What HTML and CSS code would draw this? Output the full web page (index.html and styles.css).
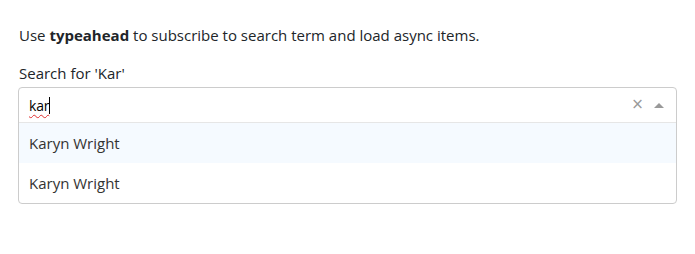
FILE: index.html
```html
<!DOCTYPE html>
<html>
<head>
<meta charset="utf-8">
<link rel="stylesheet" href="styles.css">
</head>
<body>
<div class="page">
  <p class="intro">Use <b>typeahead</b> to subscribe to search term and load async items.</p>
  <label class="label">Search for 'Kar'</label>
  <div class="select">
    <div class="control">
      <span class="value"><span class="typed">kar</span><span class="caret"></span></span>
      <span class="clear">×</span>
      <span class="arrow"></span>
    </div>
    <div class="panel">
      <div class="option marked">Karyn Wright</div>
      <div class="option">Karyn Wright</div>
    </div>
  </div>
</div>
</body>
</html>
```
FILE: styles.css
```css
html, body { margin: 0; background: #fff; }
body { font-family: "Open Sans", "Noto Sans", sans-serif; color: #212529; }
.page { padding: 24px 18px 0 18px; }
.intro { margin: 0 0 16px 1px; font-size: 15px; line-height: 22px; }
.intro b { font-weight: 700; }
.label { display: block; margin-left: 1px; font-size: 15px; line-height: 22px; margin-bottom: 3px; }
.select { width: 659px; border: 1px solid #ccc; border-radius: 4px; box-sizing: border-box; }
.control { height: 35px; display: flex; align-items: center; padding-left: 10px; border-bottom: 1px solid #e6e6e6; box-sizing: border-box; }
.value { flex: 1; font-size: 14px; color: #000; display: flex; align-items: center; }
.typed { text-decoration: underline wavy #e03030; text-decoration-thickness: 1px; text-underline-offset: 3px; letter-spacing: -0.2px; }
.caret { display: inline-block; width: 1px; height: 17px; background: #000; margin-left: 0; }
.clear { color: #999; font-size: 15px; line-height: 1; width: 17px; text-align: center; font-family: "DejaVu Sans", sans-serif; margin-top: -1px; }
.arrow { width: 25px; display: flex; justify-content: center; padding-right: 5px; }
.arrow::before { content: ""; border-style: solid; border-width: 0 5px 5px; border-color: transparent transparent #999; }
.option { height: 40px; display: flex; align-items: center; padding-left: 10px; font-size: 15px; color: #333; }
.option.marked { background: #f5faff; }
```
